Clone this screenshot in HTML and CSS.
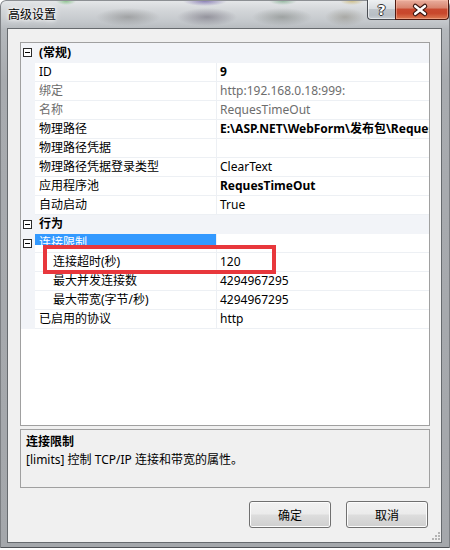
FILE: index.html
```html
<!DOCTYPE html>
<html lang="zh-CN">
<head>
<meta charset="utf-8">
<title>高级设置</title>
<link rel="stylesheet" href="styles.css">
</head>
<body>
<div class="window">
  <div class="titlebar">
    <span class="title">高级设置</span>
    <div class="caption">
      <div class="cbtn help"><span class="qmark">?</span></div>
      <div class="cbtn close">
        <svg width="54" height="20" viewBox="0 0 54 20">
          <path d="M20 6 L30 14 M30 6 L20 14" stroke="#3b1610" stroke-width="5" stroke-linecap="round" fill="none"/>
          <path d="M20 6 L30 14 M30 6 L20 14" stroke="#ffffff" stroke-width="2.6" stroke-linecap="round" fill="none"/>
        </svg>
      </div>
    </div>
  </div>
  <div class="client">
    <div class="grid">
      <div class="row cat first"><span class="margin"><i class="tog"></i></span><span class="catname">(常规)</span></div>
      <div class="row"><span class="margin"></span><span class="name">ID</span><span class="val bold">9</span></div>
      <div class="row ro"><span class="margin"></span><span class="name">绑定</span><span class="val">http:192.168.0.18:999:</span></div>
      <div class="row ro"><span class="margin"></span><span class="name">名称</span><span class="val">RequesTimeOut</span></div>
      <div class="row"><span class="margin"></span><span class="name">物理路径</span><span class="val bold">E:\ASP.NET\WebForm\发布包\RequesTimeOut</span></div>
      <div class="row"><span class="margin"></span><span class="name">物理路径凭据</span><span class="val"></span></div>
      <div class="row"><span class="margin"></span><span class="name">物理路径凭据登录类型</span><span class="val">ClearText</span></div>
      <div class="row"><span class="margin"></span><span class="name">应用程序池</span><span class="val bold">RequesTimeOut</span></div>
      <div class="row"><span class="margin"></span><span class="name">自动启动</span><span class="val">True</span></div>
      <div class="row cat"><span class="margin"><i class="tog"></i></span><span class="catname">行为</span></div>
      <div class="row"><span class="margin"><i class="tog"></i></span><span class="name sel">连接限制</span><span class="val"></span></div>
      <div class="row sub"><span class="margin"></span><span class="name">连接超时(秒)</span><span class="val">120</span></div>
      <div class="row sub"><span class="margin"></span><span class="name">最大并发连接数</span><span class="val">4294967295</span></div>
      <div class="row sub"><span class="margin"></span><span class="name">最大带宽(字节/秒)</span><span class="val">4294967295</span></div>
      <div class="row"><span class="margin"></span><span class="name">已启用的协议</span><span class="val">http</span></div>
      <div class="redbox"></div>
    </div>
    <div class="desc">
      <div class="desc-title">连接限制</div>
      <div class="desc-text">[limits] 控制 TCP/IP 连接和带宽的属性。</div>
    </div>
    <div class="btns">
      <button class="btn">确定</button>
      <button class="btn">取消</button>
    </div>
    <svg class="grip" width="10" height="10" viewBox="0 0 10 10">
      <g fill="#b4b4b4">
        <rect x="7" y="1" width="2" height="2"/>
        <rect x="4" y="4" width="2" height="2"/><rect x="7" y="4" width="2" height="2"/>
        <rect x="1" y="7" width="2" height="2"/><rect x="4" y="7" width="2" height="2"/><rect x="7" y="7" width="2" height="2"/>
      </g>
    </svg>
  </div>
</div>
</body>
</html>
```
FILE: styles.css
```css
html, body {
  margin: 0;
  padding: 0;
}
body {
  width: 450px;
  height: 550px;
  overflow: hidden;
  background: #ffffff;
  font-family: "Noto Sans", "Noto Sans CJK SC", sans-serif;
  font-size: 12px;
  color: #000;
}

.window {
  width: 450px;
  height: 548px;
  box-sizing: border-box;
  padding: 0 8px 5px 7px;
  display: flex;
  flex-direction: column;
  border-radius: 6px 6px 0 0;
  background-color: #a6a9ad;
  background-image:
    radial-gradient(ellipse 10px 4px at 66px 1px, rgba(70,170,70,.55), transparent),
    radial-gradient(ellipse 22px 5px at 205px 1px, rgba(80,60,150,.6), transparent),
    radial-gradient(ellipse 14px 4px at 283px 1px, rgba(70,140,90,.5), transparent),
    radial-gradient(ellipse 12px 4px at 352px 1px, rgba(190,160,60,.55), transparent),
    radial-gradient(ellipse 32px 9px at 128px 17px, rgba(110,110,110,.45), transparent),
    radial-gradient(ellipse 30px 9px at 207px 17px, rgba(95,90,105,.5), transparent),
    radial-gradient(ellipse 30px 9px at 282px 17px, rgba(105,110,105,.45), transparent),
    radial-gradient(ellipse 20px 9px at 345px 17px, rgba(120,115,100,.4), transparent),
    linear-gradient(180deg, #e6e8ea 0px, #d3d6d9 10px, #c3c7cb 22px, #b4b8bc 30px, #a8abaf 80px, #a4a7ab 100%);
  box-shadow: inset 1px 0 0 #7c7f83, inset -1px 0 0 #7c7f83, inset 0 -1px 0 #4f5256, inset 0 1px 0 #8c8f93;
}

.titlebar {
  height: 28px;
  flex: none;
  display: flex;
  justify-content: space-between;
  align-items: flex-start;
  margin-right: -7px;
}
.title {
  padding: 6px 0 0 1px;
  font-family: "Noto Sans CJK SC", sans-serif;
  font-size: 12px;
  line-height: 16px;
  color: #000;
  text-shadow: 0 0 5px #fff, 0 0 3px #fff, 0 0 8px rgba(255,255,255,.8);
}
.caption {
  display: flex;
  height: 20px;
}
.cbtn {
  box-sizing: border-box;
  height: 20px;
  border: 1px solid #4a4e54;
  border-top: none;
  display: flex;
  align-items: center;
  justify-content: center;
}
.help {
  width: 28px;
  border-right: none;
  border-radius: 0 0 0 4px;
  background: linear-gradient(180deg, #eef0f2 0%, #d9dde1 45%, #bfc5cb 50%, #b7bec5 80%, #c9cfd5 100%);
  box-shadow: inset 1px 0 0 rgba(255,255,255,.6), inset 0 -1px 0 rgba(255,255,255,.5);
}
.qmark {
  font-family: "DejaVu Sans", sans-serif;
  font-weight: bold;
  font-size: 14px;
  line-height: 14px;
  color: #fff;
  text-shadow: 1px 0 0 #333, -1px 0 0 #333, 0 1px 0 #333, 0 -1px 0 #333;
}
.close {
  width: 54px;
  border-color: #4f1a10;
  border-radius: 0 0 4px 0;
  background: linear-gradient(180deg, #e9ae9e 0%, #d98670 40%, #c9492f 50%, #c8472c 70%, #dc7a52 100%);
  box-shadow: inset 0 0 0 1px rgba(255,200,180,.45);
}
.close svg {
  display: block;
}

.client {
  flex: 1;
  position: relative;
  border: 1px solid #666a6e;
  background: #f0f0f0;
  display: flex;
  flex-direction: column;
  padding: 13px 11px 0 12px;
}

.grid {
  position: relative;
  box-sizing: border-box;
  width: 410px;
  height: 384px;
  flex: none;
  border: 1px solid #a0a0a0;
  background: #ffffff;
  overflow: hidden;
}
.row {
  display: flex;
  height: 19px;
  line-height: 18px;
  white-space: nowrap;
}
.row.first {
  height: 20px;
  line-height: 20px;
}
.margin {
  position: relative;
  flex: none;
  width: 14px;
  background: #f2f4f8;
}
.tog {
  position: absolute;
  left: 2px;
  top: 5px;
  box-sizing: border-box;
  width: 9px;
  height: 9px;
  border: 1px solid #2a2a2a;
  background: #fff;
}
.row.first .tog {
  top: 5px;
}
.tog::after {
  content: "";
  position: absolute;
  left: 1px;
  top: 3px;
  width: 5px;
  height: 1px;
  background: #000;
}
.name {
  flex: none;
  box-sizing: border-box;
  width: 182px;
  padding-left: 4px;
  border-right: 1px solid #edf0f4;
  border-bottom: 1px solid #edf0f4;
  overflow: hidden;
}
.val {
  flex: 1;
  min-width: 0;
  padding-left: 3px;
  border-bottom: 1px solid #edf0f4;
  overflow: hidden;
}
.bold {
  font-weight: bold;
}
.ro .name, .ro .val {
  color: #6d6d6d;
}
.sub .name {
  padding-left: 18px;
}
.cat {
  background: #f2f4f8;
}
.catname {
  padding-left: 4px;
  font-weight: bold;
}
.name.sel {
  color: #fff;
  background: linear-gradient(180deg, #3399ff 0, #3399ff 11px, #ffffff 11px);
}
.redbox {
  position: absolute;
  left: 22px;
  top: 202px;
  width: 233px;
  height: 29px;
  box-sizing: border-box;
  border: 4px solid #e8373c;
  pointer-events: none;
}

.desc {
  box-sizing: border-box;
  width: 410px;
  height: 59px;
  flex: none;
  margin-top: 3px;
  border: 1px solid #a0a0a0;
  background: #f0f0f0;
  padding: 3px 5px 0;
  line-height: 18px;
}
.desc-title {
  font-weight: bold;
}

.btns {
  display: flex;
  justify-content: flex-end;
  gap: 15px;
  margin-top: 13px;
  padding-right: 2px;
}
.btn {
  box-sizing: border-box;
  width: 82px;
  height: 27px;
  border: 1px solid #707070;
  border-radius: 3px;
  background: linear-gradient(180deg, #f2f2f2 0%, #ebebeb 48%, #dddddd 52%, #cfcfcf 100%);
  box-shadow: inset 0 0 0 1px #fcfcfc;
  font-family: "Noto Sans CJK SC", sans-serif;
  font-size: 12px;
  color: #000;
  padding: 0;
}
.grip {
  position: absolute;
  right: 0;
  bottom: 1px;
}
```
